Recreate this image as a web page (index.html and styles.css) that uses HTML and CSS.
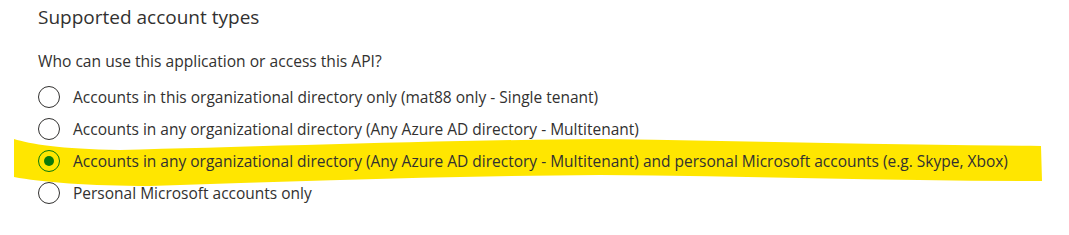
FILE: index.html
```html
<!DOCTYPE html>
<html>
<head>
<meta charset="utf-8">
<link rel="stylesheet" href="styles.css">
</head>
<body>
<div class="page">
  <svg class="highlight" width="1069" height="235" viewBox="0 0 1069 235">
    <path d="M14 139 C 30 144, 60 149, 120 150 C 250 147, 450 140, 600 139 C 750 141, 900 145, 1041 146 L 1042 181 C 900 181, 750 176, 600 175 C 450 176, 300 181, 150 186 C 90 186, 40 182, 14 177 Z" fill="#ffe600"/>
  </svg>
  <h2 class="title">Supported account types</h2>
  <p class="question">Who can use this application or access this API?</p>
  <div class="options">
    <label class="option"><span class="radio"></span><span>Accounts in this organizational directory only (mat88 only - Single tenant)</span></label>
    <label class="option"><span class="radio"></span><span>Accounts in any organizational directory (Any Azure AD directory - Multitenant)</span></label>
    <label class="option"><span class="radio checked"></span><span>Accounts in any organizational directory (Any Azure AD directory - Multitenant) and personal Microsoft accounts (e.g. Skype, Xbox)</span></label>
    <label class="option"><span class="radio"></span><span>Personal Microsoft accounts only</span></label>
  </div>
</div>
</body>
</html>
```

FILE: styles.css
```css
html, body {
  margin: 0;
  padding: 0;
  background: #ffffff;
}
body {
  width: 1069px;
  height: 235px;
  overflow: hidden;
  font-family: "Open Sans", "Noto Sans", sans-serif;
  color: #323130;
}
.page {
  position: relative;
  padding: 3px 0 0 38px;
}
.highlight {
  position: absolute;
  left: 0;
  top: 0;
  z-index: 0;
}
.title, .question, .options {
  position: relative;
  z-index: 1;
}
.title {
  margin: 0;
  font-size: 19px;
  font-weight: 400;
  line-height: 28px;
}
.question {
  margin: 20px 0 0 0;
  font-size: 15.6px;
  line-height: 20px;
}
.options {
  margin-top: 15px;
  display: flex;
  flex-direction: column;
  gap: 10px;
}
.option {
  display: flex;
  align-items: center;
  gap: 13px;
  font-size: 15.5px;
  line-height: 20px;
}
.radio {
  box-sizing: border-box;
  width: 22px;
  height: 22px;
  border: 1.5px solid #323130;
  border-radius: 50%;
  flex: none;
  display: flex;
  align-items: center;
  justify-content: center;
}
.radio.checked {
  border-color: #0b7a0b;
}
.radio.checked::after {
  content: "";
  width: 10px;
  height: 10px;
  border-radius: 50%;
  background: #0b7a0b;
}
```
